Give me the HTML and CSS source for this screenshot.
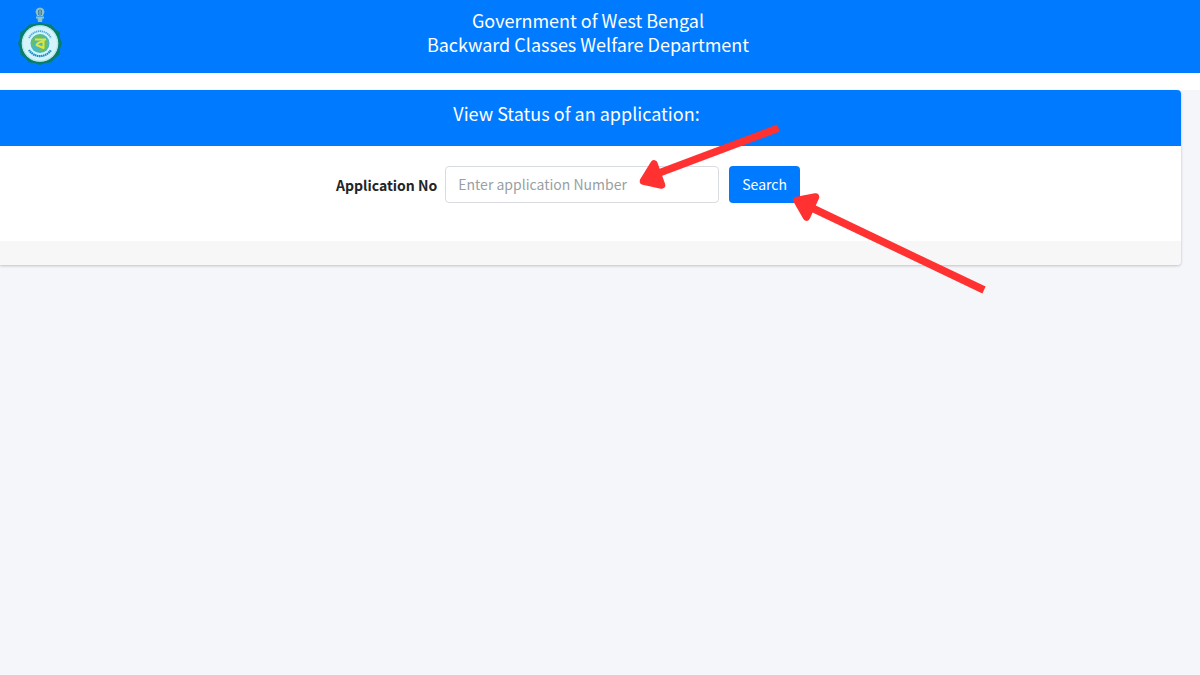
FILE: index.html
```html
<!DOCTYPE html>
<html lang="en">
<head>
<meta charset="utf-8">
<meta name="viewport" content="width=device-width, initial-scale=1">
<title>View Status of an application</title>
<link rel="stylesheet" href="styles.css">
</head>
<body>
<header class="site-header">
  <svg class="emblem" viewBox="0 0 44 60" role="img" aria-label="State emblem">
    <g fill="#8cc3c3">
      <path d="M18.500 2q3.500-3 7 0l1 3-1.500 4h-6l-1.500-4z"/>
      <path d="M18 9.500h8v2h-8zM19.500 11.500h5l-.5 3.500h-4z"/>
    </g>
    <path d="M20.500 3v5M22 2v7M23.500 3v5" stroke="#31668f" stroke-width=".7"/>
    <path d="M22 15.500L27.500 17l5.500.5 4 4.500 4.500 3 .5 6 2 5.500-2 5.500-.5 5.500-4.500 3.500-4 4.500-5.500.5L22 58l-5.500-2-5.500-.5L7 51l-4.500-3.500L2 42 0 36.500 2 31l.5-6L7 22l4-4.500 5.500-.5z" fill="#087d68"/>
    <circle cx="22" cy="36.500" r="18.300" fill="#d5f3fb"/>
    <circle cx="22" cy="36.500" r="17.500" fill="none" stroke="#9bdce9" stroke-width=".7"/>
    <path d="M11 31a12.300 12.300 0 0 1 22 0" fill="none" stroke="#4da9d8" stroke-width="1.800" stroke-dasharray="1.300 .6"/>
    <path d="M11 43a13 13 0 0 0 22 0" fill="none" stroke="#168cc6" stroke-width="2.200" stroke-dasharray="1.500 .5"/>
    <circle cx="22" cy="36.500" r="9.500" fill="#4bb7bf"/>
    <path d="M14 32q5-6 12-4l-3 4-6 2-2 6q-3-3-1-8zM26 30l4 3v7l-5 5-5-1 4-4z" fill="#67bd68"/>
    <path d="M17 32.500h11M25.500 32.500v8.500l-7-3q1.500-3 6.500-3.500" fill="none" stroke="#e1e63b" stroke-width="2" stroke-linejoin="round"/>
  </svg>
  <h1 class="site-title">Government of West Bengal<br>Backward Classes Welfare Department</h1>
</header>
<main class="content">
  <section class="card">
    <h2 class="card-header">View Status of an application:</h2>
    <form class="card-body">
      <label class="label" for="application-no">Application No</label>
      <div class="field">
        <input class="input" id="application-no" type="text" placeholder="Enter application Number">
        <svg class="arrow arrow-field" viewBox="0 0 142 66" aria-hidden="true">
          <path d="M139.500 4L20 49" stroke="#ff3131" stroke-width="7.500"/>
          <path d="M4.500 57L15 40L22.500 61z" fill="#ff3131" stroke="#ff3131" stroke-width="7.500" stroke-linejoin="round"/>
        </svg>
      </div>
      <div class="action">
        <button class="button" type="button">Search</button>
        <svg class="arrow arrow-button" viewBox="0 0 196 108" aria-hidden="true">
          <path d="M191 100L17 17" stroke="#ff3131" stroke-width="7.500"/>
          <path d="M4 10.500L22.500 7L13.500 27z" fill="#ff3131" stroke="#ff3131" stroke-width="7.500" stroke-linejoin="round"/>
        </svg>
      </div>
    </form>
    <div class="card-footer"></div>
  </section>
</main>
</body>
</html>
```
FILE: styles.css
```css
* {
  box-sizing: border-box;
}

body {
  margin: 0;
  min-height: 100vh;
  display: flex;
  flex-direction: column;
  background: #fff;
  color: #212529;
  font-family: "Source Sans Pro", "Noto Sans CJK SC", "Noto Sans", sans-serif;
  font-size: 14px;
}

.site-header {
  display: grid;
  grid-template-columns: 44px 1fr 44px;
  align-items: start;
  padding: 7px 42px 6px 18px;
  background: #007bff;
  color: #fff;
}

.emblem {
  width: 44px;
  height: 60px;
}

.site-title {
  margin: 0;
  padding-top: 1px;
  font-size: 18px;
  font-weight: 400;
  line-height: 24px;
  text-align: center;
}

.content {
  flex: 1;
  margin-top: 17px;
  padding-right: 19px;
  background: #f4f6f9;
}

.card {
  border-radius: 0 4px 4px 0;
  background: #fff;
  box-shadow: 0 0 1px rgba(0, 0, 0, 0.13), 0 1px 3px rgba(0, 0, 0, 0.2);
}

.card-header {
  margin: 0;
  padding: 11px 28px 21px 0;
  border-radius: 0 4px 0 0;
  background: #007bff;
  color: #fff;
  font-size: 18px;
  font-weight: 400;
  line-height: 24px;
  text-align: center;
}

.card-body {
  display: flex;
  justify-content: center;
  align-items: center;
  padding: 20px 45px 38px 0;
}

.label {
  margin-right: 8px;
  font-weight: 700;
}

.field {
  position: relative;
  width: 274px;
}

.input {
  display: block;
  width: 100%;
  height: 37px;
  padding: 0 12px 2px;
  border: 1px solid #d8dce0;
  border-radius: 4px;
  background: #fff;
  color: #495057;
  font: inherit;
}

.input::placeholder {
  color: #999fa4;
  opacity: 1;
}

.action {
  position: relative;
  margin-left: 10px;
}

.button {
  display: block;
  height: 37px;
  padding: 0 13px 2px;
  border: 0;
  border-radius: 4px;
  background: #007bff;
  color: #fff;
  font: inherit;
}

.card-footer {
  height: 24px;
  border-radius: 0 0 4px 0;
  background: #f7f7f7;
}

.arrow {
  position: absolute;
  z-index: 1;
  pointer-events: none;
}

.arrow-field {
  top: -42px;
  left: 194px;
  width: 142px;
  height: 66px;
}

.arrow-button {
  top: 24px;
  left: 64px;
  width: 196px;
  height: 108px;
}
```
